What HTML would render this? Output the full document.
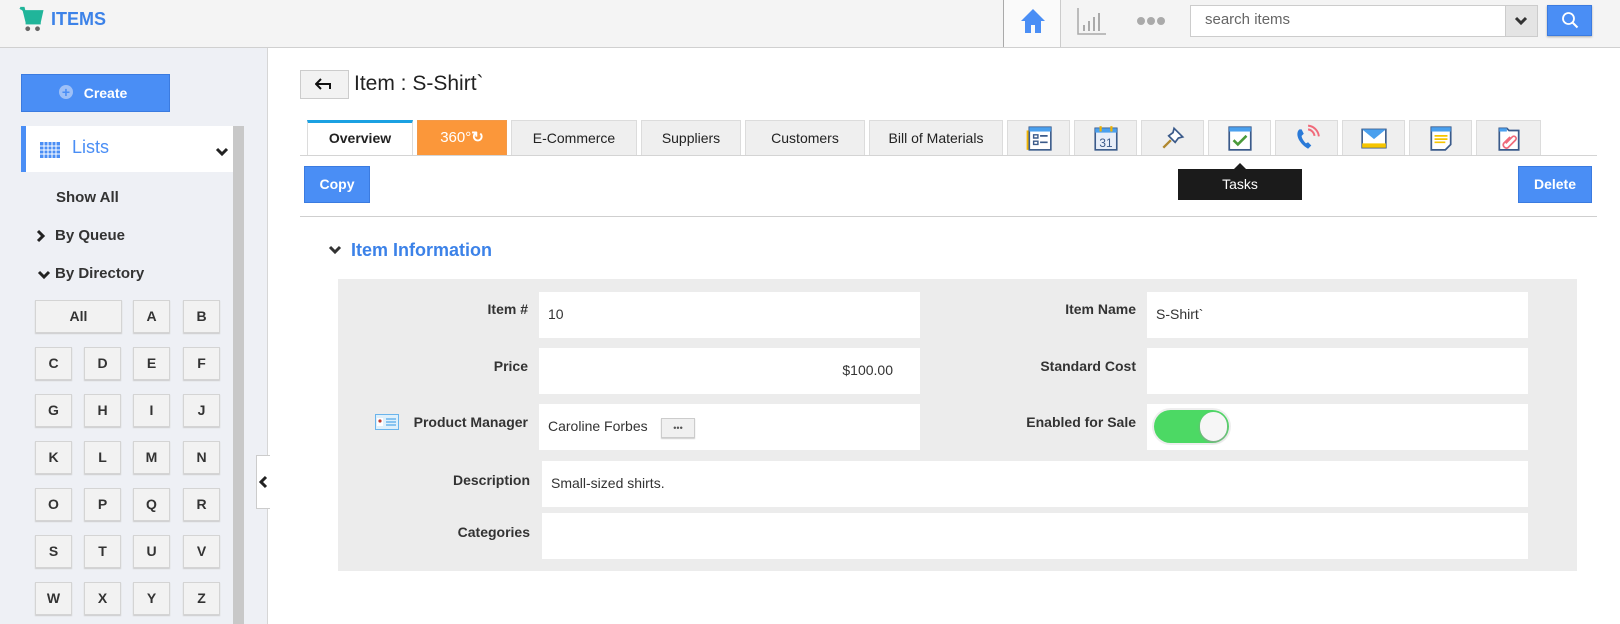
<!DOCTYPE html>
<html><head><meta charset="utf-8"><style>
*{box-sizing:border-box;margin:0;padding:0}
body{width:1620px;height:624px;overflow:hidden;background:#fff;font-family:"Liberation Sans",Arial,sans-serif;color:#333;position:relative;font-size:14px}
.a{position:absolute}
.hdr{left:0;top:0;width:1620px;height:48px;background:#f4f4f4;border-bottom:1px solid #d0d0d0}
.side{left:0;top:48px;width:268px;height:576px;background:#eef0f5;border-right:1px solid #d6d6d6}
.lb{position:absolute;width:37px;height:33px;background:#f2f2f2;border:1px solid #d4d4d4;box-shadow:0 1px 1px #ccc;font-weight:bold;font-size:14px;text-align:center;line-height:31px;color:#333}
.tab{position:absolute;top:120px;height:35px;background:#efefef;border:1px solid #dcdcdc;border-bottom:none;font-size:14px;text-align:center;line-height:34px;color:#222}
.it{width:63px}
.it svg{margin-top:3px}
.lbl{position:absolute;font-weight:bold;font-size:14px;color:#333;text-align:right}
.inp{position:absolute;background:#fff;height:46px;font-size:14px;color:#333;padding:14px 9px}
.btn{position:absolute;background:#4a8ef5;border:1px solid #3b7be0;color:#fff;font-weight:bold;font-size:14px;text-align:center}
</style></head><body>
<div class="a hdr"></div>
<svg class="a" style="left:18px;top:6px" width="26" height="26" viewBox="0 0 24 24"><path d="M1 2h4l1 3h16l-2 9H7L5 5" fill="#20b59a"/><path d="M2 2h3l3 12h12l2-9H6" fill="none" stroke="#20b59a" stroke-width="2.5"/><rect x="7" y="15" width="14" height="2" fill="#20b59a"/><circle cx="9" cy="21" r="2.2" fill="#666"/><circle cx="18" cy="21" r="2.2" fill="#666"/></svg>
<div class="a" style="left:51px;top:9px;font-size:18px;font-weight:bold;color:#3c82e8">ITEMS</div>
<div class="a" style="left:1003px;top:0;width:58px;height:47px;background:#fafafa;border-left:1px solid #aaa;border-right:1px solid #ccc"></div>
<svg class="a" style="left:1019px;top:7px" width="28" height="27" viewBox="0 0 28 27"><path d="M14 2L2 14h4v12h6v-8h4v8h6V14h4z" fill="#4a8ef5"/></svg>
<svg class="a" style="left:1077px;top:7px" width="30" height="28" viewBox="0 0 30 28"><path d="M1 1v26h28" fill="none" stroke="#aaa" stroke-width="1.5"/><path d="M7 24v-6M12 24v-10M17 24v-14M22 24v-18" stroke="#aaa" stroke-width="2"/></svg>
<div class="a" style="left:1137px;top:17px;width:8px;height:8px;border-radius:4px;background:#aaa;box-shadow:10px 0 #aaa,20px 0 #aaa"></div>
<div class="a" style="left:1190px;top:5px;width:348px;height:32px;background:#fff;border:1px solid #ccc"></div>
<div class="a" style="left:1205px;top:11px;font-size:15px;color:#666">search items</div>
<div class="a" style="left:1505px;top:6px;width:32px;height:30px;background:#e4e4e4;border-left:1px solid #ccc"></div>
<svg class="a" style="left:1514px;top:16px" width="14" height="10" viewBox="0 0 14 10"><path d="M2 2l5 5 5-5" fill="none" stroke="#333" stroke-width="3"/></svg>
<div class="btn" style="left:1547px;top:5px;width:45px;height:31px;box-shadow:0 1px 2px #aaa"></div>
<svg class="a" style="left:1561px;top:11px" width="18" height="18" viewBox="0 0 18 18"><circle cx="7.5" cy="7.5" r="5.5" fill="none" stroke="#fff" stroke-width="1.8"/><path d="M11.5 11.5l5 5" stroke="#fff" stroke-width="2"/></svg>

<div class="a side"></div>
<div class="btn" style="left:21px;top:74px;width:149px;height:38px;line-height:36px;padding-left:20px">Create</div>
<div class="a" style="left:59px;top:85px;width:14px;height:14px;border-radius:7px;background:#9ec0f7;color:#4a8ef5;font-size:14px;font-weight:bold;line-height:14px;text-align:center">+</div>
<div class="a" style="left:21px;top:126px;width:212px;height:46px;background:#fff;border-left:5px solid #4a8ef5"></div>
<svg class="a" style="left:40px;top:142px" width="20" height="16" viewBox="0 0 20 16"><rect width="20" height="16" fill="#4a8ef5"/><path d="M0 4h20M0 8h20M0 12h20M4 0v16M8 0v16M12 0v16M16 0v16" stroke="#fff" stroke-width="1"/></svg>
<div class="a" style="left:72px;top:137px;font-size:18px;color:#4a8ef5">Lists</div>
<svg class="a" style="left:215px;top:147px" width="14" height="10" viewBox="0 0 14 10"><path d="M2 2l5 5 5-5" fill="none" stroke="#222" stroke-width="3"/></svg>
<div class="a" style="left:233px;top:126px;width:11px;height:498px;background:#c8c8c8"></div>
<div class="a" style="left:56px;top:189px;font-weight:bold;font-size:15px">Show All</div>
<svg class="a" style="left:36px;top:229px" width="10" height="14" viewBox="0 0 10 14"><path d="M2 2l5 5-5 5" fill="none" stroke="#222" stroke-width="3"/></svg>
<div class="a" style="left:55px;top:227px;font-weight:bold;font-size:15px">By Queue</div>
<svg class="a" style="left:37px;top:270px" width="14" height="10" viewBox="0 0 14 10"><path d="M2 2l5 5 5-5" fill="none" stroke="#222" stroke-width="3"/></svg>
<div class="a" style="left:55px;top:265px;font-weight:bold;font-size:15px">By Directory</div>
<div class="lb" style="left:35px;top:300px;width:87px">All</div>
<div class="lb" style="left:133px;top:300px">A</div>
<div class="lb" style="left:183px;top:300px">B</div>
<div class="lb" style="left:35px;top:347px">C</div><div class="lb" style="left:84px;top:347px">D</div><div class="lb" style="left:133px;top:347px">E</div><div class="lb" style="left:183px;top:347px">F</div>
<div class="lb" style="left:35px;top:394px">G</div><div class="lb" style="left:84px;top:394px">H</div><div class="lb" style="left:133px;top:394px">I</div><div class="lb" style="left:183px;top:394px">J</div>
<div class="lb" style="left:35px;top:441px">K</div><div class="lb" style="left:84px;top:441px">L</div><div class="lb" style="left:133px;top:441px">M</div><div class="lb" style="left:183px;top:441px">N</div>
<div class="lb" style="left:35px;top:488px">O</div><div class="lb" style="left:84px;top:488px">P</div><div class="lb" style="left:133px;top:488px">Q</div><div class="lb" style="left:183px;top:488px">R</div>
<div class="lb" style="left:35px;top:535px">S</div><div class="lb" style="left:84px;top:535px">T</div><div class="lb" style="left:133px;top:535px">U</div><div class="lb" style="left:183px;top:535px">V</div>
<div class="lb" style="left:35px;top:582px">W</div><div class="lb" style="left:84px;top:582px">X</div><div class="lb" style="left:133px;top:582px">Y</div><div class="lb" style="left:183px;top:582px">Z</div>
<div class="a" style="left:256px;top:455px;width:14px;height:54px;background:#fff;border:1px solid #ccc;border-right:none"></div>
<svg class="a" style="left:259px;top:475px" width="10" height="14" viewBox="0 0 10 14"><path d="M7 2L2 7l5 5" fill="none" stroke="#222" stroke-width="3"/></svg>

<div class="a" style="left:300px;top:70px;width:49px;height:29px;background:#f2f2f2;border:1px solid #ccc"></div>
<svg class="a" style="left:315px;top:78px" width="18" height="12" viewBox="0 0 18 12"><path d="M6 1L1 6l5 5M1 6h14V11" fill="none" stroke="#111" stroke-width="2"/></svg>
<div class="a" style="left:354px;top:72px;font-size:21px;color:#222">Item : S-Shirt`</div>

<div class="tab" style="left:307px;width:106px;background:#fff;border-top:3px solid #1ba1e2;font-weight:bold;line-height:30px">Overview</div>
<div class="tab" style="left:417px;width:90px;background:#fb973a;border-color:#f39a4a;color:#fff;font-size:15px">360°<span style="font-weight:bold">↻</span></div>
<div class="tab" style="left:511px;width:126px">E-Commerce</div>
<div class="tab" style="left:641px;width:100px">Suppliers</div>
<div class="tab" style="left:745px;width:120px">Customers</div>
<div class="tab" style="left:869px;width:134px">Bill of Materials</div>
<div class="tab it" style="left:1007px"><svg width="28" height="28" viewBox="0 0 26 26"><rect x="1.5" y="6" width="4" height="18" fill="#f0b400"/><rect x="4" y="3" width="20" height="21" fill="#fff" stroke="#3a5a8a" stroke-width="1.5"/><rect x="4" y="3" width="20" height="4" fill="#4aa0ee"/><path d="M8 10h4v3H8zM8 16h4v3H8z" fill="none" stroke="#3a5a8a" stroke-width="1.3"/><path d="M14 11h7M14 17h7" stroke="#3a5a8a" stroke-width="1.6"/></svg></div>
<div class="tab it" style="left:1074px"><svg width="28" height="28" viewBox="0 0 26 26"><rect x="3" y="4" width="20" height="20" fill="#e8eef8" stroke="#3a5a8a" stroke-width="1.5"/><rect x="3" y="4" width="20" height="4" fill="#4aa0ee"/><path d="M8 2v5M18 2v5" stroke="#f0b400" stroke-width="2"/><text x="13" y="21.5" font-size="11" text-anchor="middle" fill="#3a5a8a" font-family="Liberation Sans">31</text></svg></div>
<div class="tab it" style="left:1141px"><svg width="28" height="28" viewBox="0 0 26 26"><path d="M14 4l8 8-4 1-3 4-6-6 4-3z" fill="#fff" stroke="#3a5a8a" stroke-width="1.6"/><path d="M11 15l-7 7" stroke="#b08830" stroke-width="2.2"/></svg></div>
<div class="tab it" style="left:1208px;background:#f4f4f4"><svg width="28" height="28" viewBox="0 0 26 26"><rect x="3" y="3" width="20" height="21" fill="#fff" stroke="#3a5a8a" stroke-width="1.6"/><rect x="3" y="3" width="20" height="4" fill="#4aa0ee"/><path d="M7 15l4 4 8-8" fill="none" stroke="#4a9a3a" stroke-width="2.4"/></svg></div>
<div class="tab it" style="left:1275px"><svg width="28" height="28" viewBox="0 0 26 26"><path d="M6 5c-4 3-2 12 8 18l3-3-3-3-2 1c-2-2-4-5-4-7l2-2-2-4z" fill="#2a7ad8"/><path d="M14 5a7 7 0 0 1 6 6M14 1.5a11 11 0 0 1 10 10" fill="none" stroke="#f06a7a" stroke-width="1.8"/></svg></div>
<div class="tab it" style="left:1342px"><svg width="28" height="28" viewBox="0 0 26 26"><rect x="2" y="5" width="22" height="17" fill="#fff" stroke="#3a5a8a" stroke-width="1.5"/><path d="M2 5l11 9 11-9z" fill="#4aa0ee"/><rect x="2" y="18" width="22" height="4" fill="#f6c500"/></svg></div>
<div class="tab it" style="left:1409px"><svg width="28" height="28" viewBox="0 0 26 26"><path d="M4 3h18v16l-5 5H4z" fill="#fff" stroke="#3a5a8a" stroke-width="1.6"/><rect x="4" y="3" width="18" height="4" fill="#4aa0ee"/><path d="M7 11h12M7 14h12M7 17h10" stroke="#f6c500" stroke-width="1.6"/></svg></div>
<div class="tab it" style="left:1476px;width:65px"><svg width="28" height="28" viewBox="0 0 26 26"><path d="M4 4h7l2 2h9v18H4z" fill="#fff" stroke="#3a5a8a" stroke-width="1.6"/><rect x="4" y="4" width="7" height="3" fill="#4aa0ee"/><path d="M10 18l6-6a2 2 0 0 1 3 3l-7 7a3 3 0 0 1-4-4l6-6" fill="none" stroke="#f06a7a" stroke-width="1.6"/></svg></div>
<div class="a" style="left:300px;top:155px;width:1297px;height:1px;background:#d4d4d4"></div>

<div class="btn" style="left:304px;top:166px;width:66px;height:37px;line-height:35px">Copy</div>
<div class="btn" style="left:1518px;top:166px;width:74px;height:37px;line-height:35px">Delete</div>
<div class="a" style="left:1234px;top:163px;width:0;height:0;border-left:6px solid transparent;border-right:6px solid transparent;border-bottom:6px solid #1b1b1b"></div>
<div class="a" style="left:1178px;top:169px;width:124px;height:31px;background:#1b1b1b;color:#fff;font-size:14px;text-align:center;line-height:31px">Tasks</div>
<div class="a" style="left:300px;top:216px;width:1297px;height:1px;background:#cfcfcf"></div>

<svg class="a" style="left:328px;top:245px" width="14" height="10" viewBox="0 0 14 10"><path d="M2 2l5 5 5-5" fill="none" stroke="#333" stroke-width="3"/></svg>
<div class="a" style="left:351px;top:240px;font-size:18px;font-weight:bold;color:#3c82e8">Item Information</div>

<div class="a" style="left:338px;top:279px;width:1239px;height:292px;background:#ececec"></div>
<div class="lbl" style="left:380px;top:301px;width:148px">Item #</div>
<div class="inp" style="left:539px;top:292px;width:381px">10</div>
<div class="lbl" style="left:960px;top:301px;width:176px">Item Name</div>
<div class="inp" style="left:1147px;top:292px;width:381px">S-Shirt`</div>
<div class="lbl" style="left:380px;top:358px;width:148px">Price</div>
<div class="inp" style="left:539px;top:348px;width:381px;text-align:right;padding-right:27px">$100.00</div>
<div class="lbl" style="left:960px;top:358px;width:176px">Standard Cost</div>
<div class="inp" style="left:1147px;top:348px;width:381px"></div>
<svg class="a" style="left:375px;top:414px" width="24" height="16" viewBox="0 0 24 16"><rect x="0.5" y="0.5" width="23" height="15" fill="#dff0fb" stroke="#6ab4ec"/><rect x="2" y="4" width="6" height="8" fill="#fff"/><circle cx="5" cy="7" r="1.6" fill="#c0392b"/><path d="M11 5h10M11 8h10M11 11h10" stroke="#6ab4ec" stroke-width="1.4"/></svg>
<div class="lbl" style="left:380px;top:414px;width:148px">Product Manager</div>
<div class="inp" style="left:539px;top:404px;width:381px">Caroline Forbes</div>
<div class="a" style="left:661px;top:418px;width:34px;height:20px;background:#f0f0f0;border:1px solid #ccc;box-shadow:0 1px 1px #ccc;font-size:9px;text-align:center;line-height:18px;color:#555">•••</div>
<div class="lbl" style="left:960px;top:414px;width:176px">Enabled for Sale</div>
<div class="inp" style="left:1147px;top:404px;width:381px"></div>
<div class="a" style="left:1154px;top:410px;width:75px;height:33px;border-radius:17px;background:#4cd964;box-shadow:0 0 0 2px #eee"></div>
<div class="a" style="left:1200px;top:412px;width:27px;height:29px;border-radius:15px;background:#f6f6f6;box-shadow:0 1px 2px #999"></div>
<div class="lbl" style="left:380px;top:472px;width:150px">Description</div>
<div class="inp" style="left:542px;top:461px;width:986px">Small-sized shirts.</div>
<div class="lbl" style="left:380px;top:524px;width:150px">Categories</div>
<div class="inp" style="left:542px;top:513px;width:986px"></div>
</body></html>
